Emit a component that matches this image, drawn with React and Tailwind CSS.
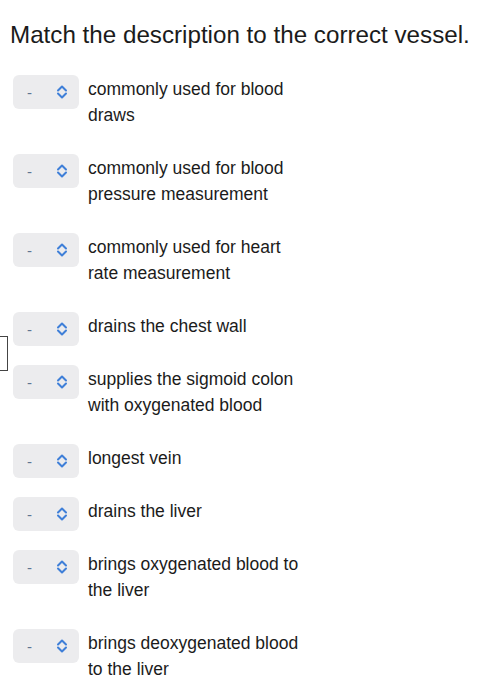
const items = [
  'commonly used for blood draws',
  'commonly used for blood pressure measurement',
  'commonly used for heart rate measurement',
  'drains the chest wall',
  'supplies the sigmoid colon with oxygenated blood',
  'longest vein',
  'drains the liver',
  'brings oxygenated blood to the liver',
  'brings deoxygenated blood to the liver',
];

const Chevrons = () => (
  <svg width="12" height="16" viewBox="0 0 12 16" fill="none" stroke="#3f7fd8" strokeWidth="2" strokeLinecap="round" strokeLinejoin="round">
    <path d="M2 6.5 L6 2.5 L10 6.5" />
    <path d="M2 9.5 L6 13.5 L10 9.5" />
  </svg>
);

export default function App() {
  return (
    <div className="relative min-h-[700px] bg-white text-[#1b1b1b]" style={{ fontFamily: '"Liberation Sans", Arial, sans-serif' }}>
      <div className="absolute left-0 top-[336px] w-[8px] h-[35px] border border-l-0 border-[#444] bg-white" />
      <div className="px-[13px] pt-[21px]">
        <h1 className="text-[24.2px] leading-[28px] -ml-[3px]">Match the description to the correct vessel.</h1>
        <div className="mt-[26px] flex flex-col gap-[19px]">
          {items.map((t) => (
            <div key={t} className="flex items-start">
              <div className="w-[66px] h-[34px] rounded-[6px] bg-[#ececee] flex items-center justify-between pl-[14px] pr-[11px] shrink-0">
                <span className="text-[15px] text-[#5f7592] leading-none">-</span>
                <Chevrons />
              </div>
              <div className="ml-[9px] w-[218px] text-[17.5px] leading-[26px] pt-[1px] pb-[7px]">{t}</div>
            </div>
          ))}
        </div>
      </div>
    </div>
  );
}
